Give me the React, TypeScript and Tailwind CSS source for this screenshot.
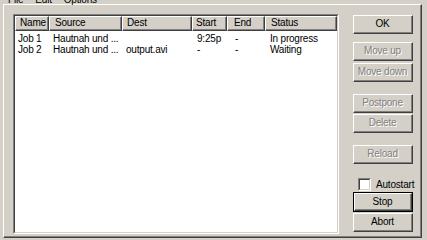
import React from 'react';

type Job = { name: string; source: string; dest: string; start: string; end: string; status: string };

const jobs: Job[] = [
  { name: 'Job 1', source: 'Hautnah und ...', dest: '', start: '9:25p', end: '-', status: 'In progress' },
  { name: 'Job 2', source: 'Hautnah und ...', dest: 'output.avi', start: '-', end: '-', status: 'Waiting' },
];

// column widths in px, same order as the header
const columns = [
  { label: 'Name', w: 'w-[34px]', pl: 'pl-[4px]' },
  { label: 'Source', w: 'w-[73px]', pl: 'pl-[5px]' },
  { label: 'Dest', w: 'w-[70px]', pl: 'pl-[4px]' },
  { label: 'Start', w: 'w-[35px]', pl: 'pl-[3px]' },
  { label: 'End', w: 'w-[38px]', pl: 'pl-[6px]' },
  { label: 'Status', w: 'w-[72px]', pl: 'pl-[5px]' },
];

const ClassicButton: React.FC<{
  label: string;
  disabled?: boolean;
  isDefault?: boolean;
  className?: string;
}> = ({ label, disabled, isDefault, className }) => (
  <div
    className={`h-[19px] w-[60px] ${isDefault ? 'h-[20px] border border-black' : ''} ${className ?? ''}`}
  >
    <div className="h-full w-full border-t border-l border-t-white border-l-white border-r border-b border-r-[#404040] border-b-[#404040]">
      <div className="flex h-full w-full items-center justify-center border-r border-b border-r-[#808080] border-b-[#808080]">
        <span
          className={
            disabled ? 'text-[#808080] [text-shadow:1px_1px_0_#ffffff]' : 'text-black'
          }
        >
          {label}
        </span>
      </div>
    </div>
  </div>
);

export default function App() {
  return (
    <div className="relative h-[240px] w-[427px] overflow-hidden bg-[#d4d0c8] text-[10px] leading-none text-black [font-family:'Liberation_Sans',Arial,sans-serif] tracking-[-0.2px]">
      {/* tab strip, mostly cut off at the top */}
      <div className="-mt-[5px] flex h-[9px] items-start gap-[12px] pl-[8px] text-black">
        <span>File</span>
        <span>Edit</span>
        <span>Options</span>
      </div>

      {/* tab panel frame */}
      <div className="ml-[3px] h-[234px] w-[419px] border-t border-l border-t-white border-l-white border-r border-b border-r-[#404040] border-b-[#404040]">
        <div className="flex h-full w-full border-r border-b border-r-[#808080] border-b-[#808080] pt-[9px] pl-[9px]">
          {/* list view */}
          <div className="h-[220px] w-[326px] border-t border-l border-t-[#808080] border-l-[#808080] border-r border-b border-r-white border-b-white">
            <div className="h-full w-full border-t border-l border-t-[#404040] border-l-[#404040] border-r border-b border-r-[#d4d0c8] border-b-[#d4d0c8] bg-white">
              <div className="flex h-[15px] bg-[#d4d0c8]">
                {columns.map((c) => (
                  <div
                    key={c.label}
                    className={`${c.w} h-full border-t border-l border-t-white border-l-white border-r border-b border-r-[#404040] border-b-[#404040]`}
                  >
                    <div className={`flex h-full items-center border-r border-b border-r-[#808080] border-b-[#808080] ${c.pl}`}>
                      {c.label}
                    </div>
                  </div>
                ))}
                <div className="flex-1 bg-white" />
              </div>
              <div className="pt-[2px]">
                {jobs.map((j) => (
                  <div key={j.name} className="flex h-[11px] items-center">
                    <div className="w-[34px] pl-[3px]">{j.name}</div>
                    <div className="w-[73px] pl-[4px]">{j.source}</div>
                    <div className="w-[70px] pl-[4px]">{j.dest}</div>
                    <div className="w-[35px] pl-[5px]">{j.start}</div>
                    <div className="w-[38px] pl-[8px]">{j.end}</div>
                    <div className="w-[72px] pl-[5px]">{j.status}</div>
                  </div>
                ))}
              </div>
            </div>
          </div>

          {/* button column */}
          <div className="ml-[14px] flex flex-col pt-[1px]">
            <ClassicButton label="OK" />
            <ClassicButton label="Move up" disabled className="mt-[8px]" />
            <ClassicButton label="Move down" disabled className="mt-[2px]" />
            <ClassicButton label="Postpone" disabled className="mt-[12px]" />
            <ClassicButton label="Delete" disabled className="mt-[1px]" />
            <ClassicButton label="Reload" disabled className="mt-[12px]" />
            <div className="mt-[14px] flex h-[13px] items-center pl-[5px]">
              <div className="h-[13px] w-[13px] border-t border-l border-t-[#808080] border-l-[#808080] border-r border-b border-r-white border-b-white">
                <div className="h-full w-full border-t border-l border-t-[#404040] border-l-[#404040] border-r border-b border-r-[#d4d0c8] border-b-[#d4d0c8] bg-white" />
              </div>
              <span className="ml-[5px]">Autostart</span>
            </div>
            <ClassicButton label="Stop" isDefault className="mt-[1px]" />
            <ClassicButton label="Abort" className="mt-[1px]" />
          </div>
        </div>
      </div>
    </div>
  );
}
